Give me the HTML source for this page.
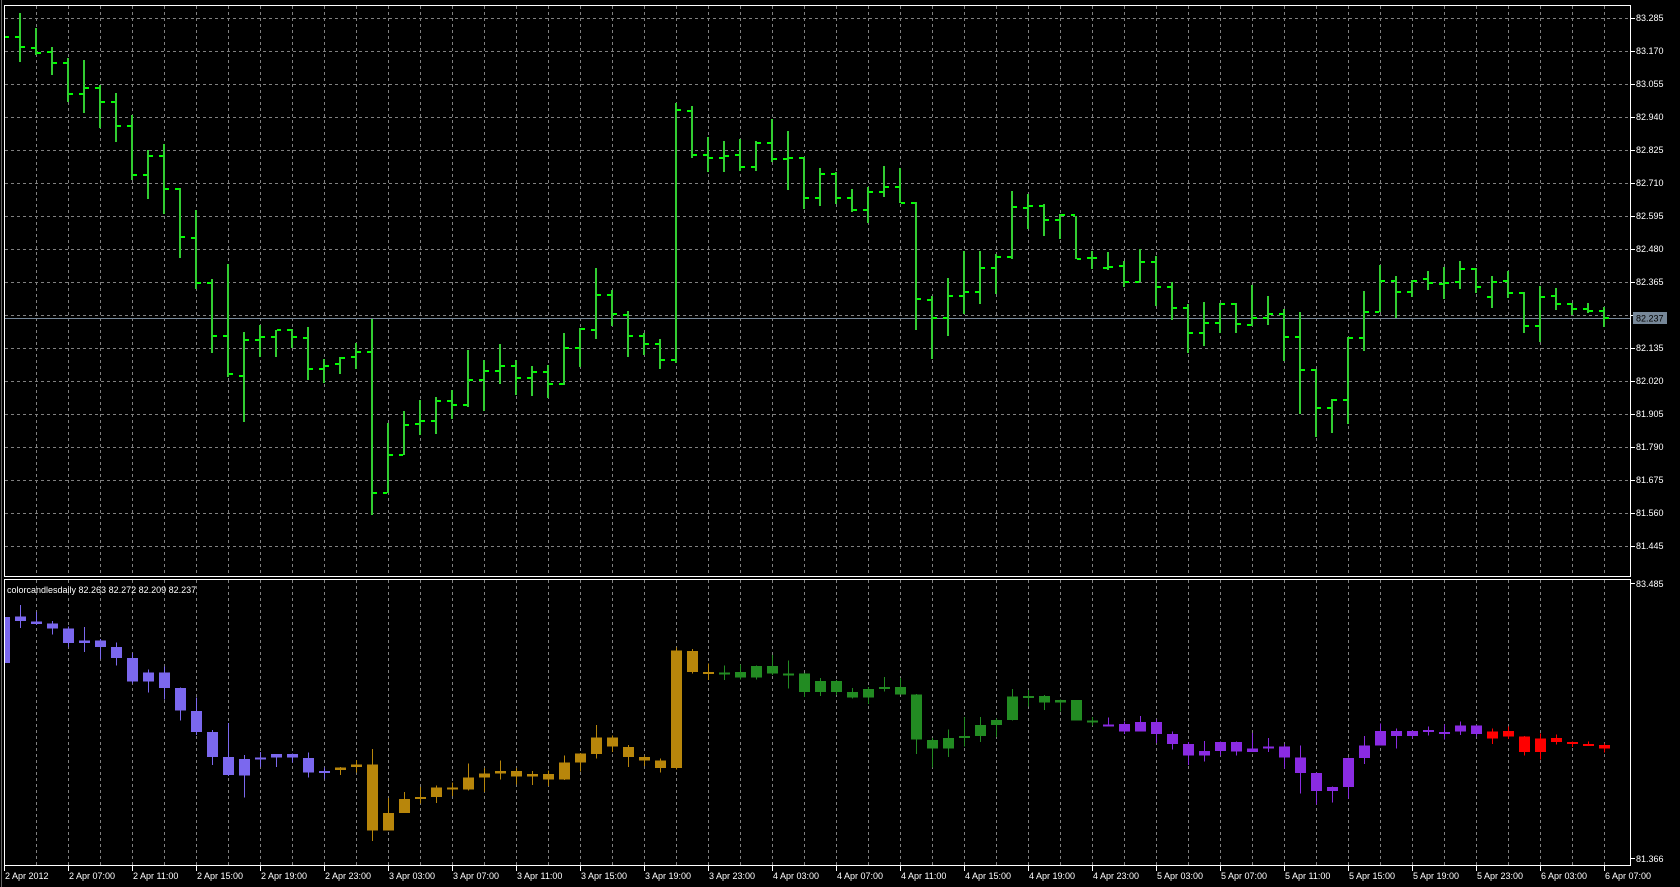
<!DOCTYPE html>
<html><head><meta charset="utf-8"><style>
html,body{margin:0;padding:0;background:#000;width:1680px;height:887px;overflow:hidden}
svg{position:absolute;left:0;top:0}
text{font-family:"Liberation Sans",sans-serif;font-size:9px;fill:#fff}
</style></head><body>
<svg id="s" width="1680" height="887" xmlns="http://www.w3.org/2000/svg" shape-rendering="crispEdges">
<rect x="0" y="0" width="1680" height="887" fill="#000"/>
<g id="grid"></g>
<line x1="4" y1="318.5" x2="1631" y2="318.5" stroke="#778899" stroke-width="1"/>
<g id="bars"></g>
<g id="candles"></g>
<rect x="4.5" y="5.5" width="1626" height="571" fill="none" stroke="#fff" stroke-width="1"/>
<rect x="4.5" y="579.5" width="1626" height="286" fill="none" stroke="#fff" stroke-width="1"/>
<line x1="1.5" y1="0" x2="1.5" y2="887" stroke="#666" stroke-width="1"/>
<g id="ticks"></g>
<rect x="1633" y="312" width="34" height="12" fill="#778899"/>
<text x="1636" y="321.5" style="fill:#000">82.237</text>
<g>
<text x="1636" y="21">83.285</text>
<text x="1636" y="54">83.170</text>
<text x="1636" y="87">83.055</text>
<text x="1636" y="120">82.940</text>
<text x="1636" y="153">82.825</text>
<text x="1636" y="186">82.710</text>
<text x="1636" y="219">82.595</text>
<text x="1636" y="252">82.480</text>
<text x="1636" y="285">82.365</text>
<text x="1636" y="351">82.135</text>
<text x="1636" y="384">82.020</text>
<text x="1636" y="417">81.905</text>
<text x="1636" y="450">81.790</text>
<text x="1636" y="483">81.675</text>
<text x="1636" y="516">81.560</text>
<text x="1636" y="549">81.445</text>
<text x="1636" y="587">83.485</text>
<text x="1636" y="862">81.366</text>
</g>
<text x="7" y="593">colorcandlesdaily 82.263 82.272 82.209 82.237</text>
<g>
<text x="5" y="879">2 Apr 2012</text>
<text x="69" y="879">2 Apr 07:00</text>
<text x="133" y="879">2 Apr 11:00</text>
<text x="197" y="879">2 Apr 15:00</text>
<text x="261" y="879">2 Apr 19:00</text>
<text x="325" y="879">2 Apr 23:00</text>
<text x="389" y="879">3 Apr 03:00</text>
<text x="453" y="879">3 Apr 07:00</text>
<text x="517" y="879">3 Apr 11:00</text>
<text x="581" y="879">3 Apr 15:00</text>
<text x="645" y="879">3 Apr 19:00</text>
<text x="709" y="879">3 Apr 23:00</text>
<text x="773" y="879">4 Apr 03:00</text>
<text x="837" y="879">4 Apr 07:00</text>
<text x="901" y="879">4 Apr 11:00</text>
<text x="965" y="879">4 Apr 15:00</text>
<text x="1029" y="879">4 Apr 19:00</text>
<text x="1093" y="879">4 Apr 23:00</text>
<text x="1157" y="879">5 Apr 03:00</text>
<text x="1221" y="879">5 Apr 07:00</text>
<text x="1285" y="879">5 Apr 11:00</text>
<text x="1349" y="879">5 Apr 15:00</text>
<text x="1413" y="879">5 Apr 19:00</text>
<text x="1477" y="879">5 Apr 23:00</text>
<text x="1541" y="879">6 Apr 03:00</text>
<text x="1605" y="879">6 Apr 07:00</text>
</g>
</svg>
<script>
var NS="http://www.w3.org/2000/svg";
function el(p,t,a){var e=document.createElementNS(NS,t);for(var k in a)e.setAttribute(k,a[k]);p.appendChild(e);return e;}
var g=document.getElementById('grid'),bg=document.getElementById('bars'),cg=document.getElementById('candles'),tg=document.getElementById('ticks');
for(var x=36;x<1631;x+=32){
  el(g,'line',{x1:x+0.5,y1:6,x2:x+0.5,y2:576,stroke:'#808080','stroke-dasharray':'3,3'});
  el(g,'line',{x1:x+0.5,y1:580,x2:x+0.5,y2:865,stroke:'#808080','stroke-dasharray':'3,3'});
}
for(var k=0;k<17;k++){
  var y=Math.round(17.7+33*k)+0.5;
  el(g,'line',{x1:5,y1:y,x2:1631,y2:y,stroke:'#808080','stroke-dasharray':'3,3'});
  el(tg,'line',{x1:1631,y1:y,x2:1635,y2:y,stroke:'#fff'});
}
el(tg,'line',{x1:1631,y1:583.5,x2:1635,y2:583.5,stroke:'#fff'});
el(tg,'line',{x1:1631,y1:858.5,x2:1635,y2:858.5,stroke:'#fff'});
for(var k=0;k<26;k++){var tx=4+64*k+0.5;el(tg,'line',{x1:tx,y1:866,x2:tx,y2:871,stroke:'#fff'});}
var D=[[13,62,37,47],[28,55,48,53],[47,75,52,63],[58,102,63,94],[60,113,94,88],[85,128,88,102],[93,142,102,126],[115,180,126,175],[150,199,175,156],[144,214,156,189],
[188,258,189,237],[210,289,238,283],[279,353,283,336],[264,377,336,374],[332,422,376,340],[325,357,340,337],[330,357,337,330],[329,348,330,337],[327,380,338,369],[359,383,369,366],
[357,374,364,358],[343,369,357,352],[319,515,352,493],[423,493,493,455],[411,455,455,425],[400,435,424,421],[397,434,421,401],[390,419,401,405],[350,407,405,380],[360,411,380,371],
[344,384,371,366],[360,395,366,378],[366,396,378,372],[365,398,372,384],[333,385,384,348],[328,367,348,329],[268,339,330,295],[290,326,295,314],[311,357,315,336],[333,355,336,344],
[339,369,344,360],[103,363,360,110],[106,158,111,155],[137,172,155,158],[141,172,158,156],[139,171,155,167],[141,171,167,143],[119,162,143,159],[131,190,159,158],[157,209,158,198],
[168,206,198,174],[172,204,174,198],[189,212,198,210],[187,223,210,192],[166,197,192,187],[168,203,187,203],[202,330,203,299],[296,359,300,318],[278,336,318,296],[251,314,296,292],
[251,304,292,268],[254,294,268,257],[191,259,257,207],[194,229,208,206],[204,236,206,220],[214,239,220,215],[216,259,215,259],[251,269,258,258],[252,270,268,267],[261,287,266,282],
[249,282,282,262],[256,306,262,287],[282,320,287,308],[304,353,308,333],[302,346,333,323],[303,333,323,304],[303,333,304,324],[285,326,325,318],[296,325,318,314],[309,361,314,337],
[312,414,337,370],[369,437,370,408],[399,433,408,400],[337,424,400,338],[291,351,338,312],[265,312,312,281],[276,318,281,292],[280,297,292,281],[271,290,279,283],[267,299,284,283],
[261,289,282,269],[268,293,269,287],[276,308,297,282],[271,298,281,293],[292,333,293,326],[286,342,326,297],[288,310,296,304],[303,315,304,309],[303,313,309,311],[307,327,311,318]];
el(bg,'rect',{x:5,y:36,width:4,height:2,fill:'#00ff00'});
el(cg,'rect',{x:5,y:617,width:5,height:46,fill:'#7b68ee'});
function ly(y){return 599+y*0.47;}
var cols=['#7b68ee','#b8860b','#228b22','#8a2be2','#ff0000'];
D.forEach(function(d,i){
  var x=20+16*i,H=d[0],L=d[1],O=d[2],C=d[3];
  el(bg,'rect',{x:x-1,y:H,width:2,height:L-H,fill:'#32cd32'});
  el(bg,'rect',{x:x-5,y:O-1,width:4,height:2,fill:'#00ff00'});
  el(bg,'rect',{x:x+1,y:C-1,width:4,height:2,fill:'#00ff00'});
  var c=cols[Math.min(4,Math.floor((i+4)/24))];
  var h=ly(H),l=ly(L),o=ly(O),cc=ly(C);
  el(cg,'rect',{x:x,y:h,width:1,height:l-h,fill:c});
  var t=Math.min(o,cc),b=Math.max(o,cc);if(b-t<2)b=t+2;
  el(cg,'rect',{x:x-5,y:t,width:11,height:b-t,fill:c});
});
</script>
</body></html>
